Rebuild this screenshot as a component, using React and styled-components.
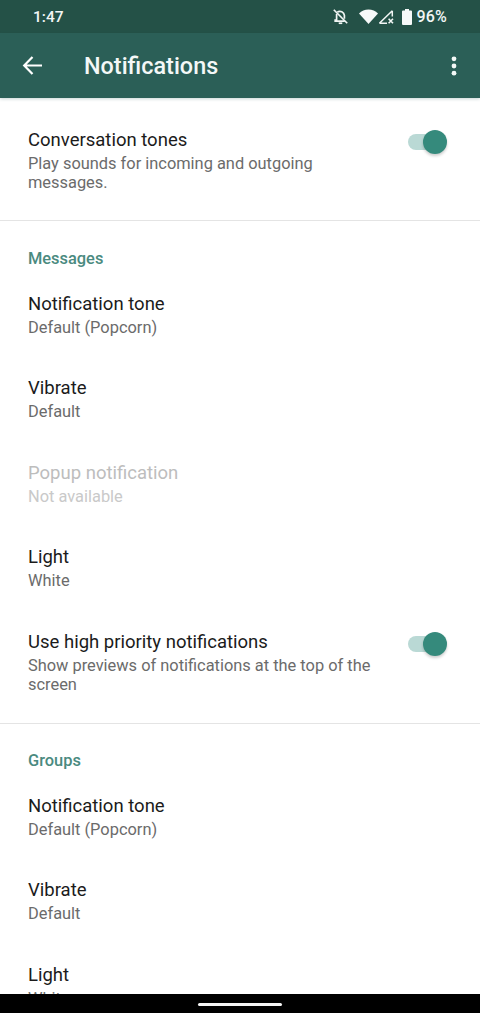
import React from "react";
import styled, { createGlobalStyle } from "styled-components";

const GlobalStyle = createGlobalStyle`
  html, body {
    margin: 0;
    padding: 0;
    background: #fff;
  }
  body {
    font-family: Roboto, "Liberation Sans", sans-serif;
  }
`;

const Page = styled.div`
  width: 480px;
  height: 1013px;
  display: flex;
  flex-direction: column;
  overflow: hidden;
  background: #fff;
`;

const StatusBar = styled.div`
  height: 33px;
  flex: none;
  display: flex;
  align-items: center;
  justify-content: space-between;
  padding: 0 33px 0 33px;
  background: #245147;
  color: #f2f6f5;
  font-size: 15.5px;
  font-weight: 500;
`;

const StatusIcons = styled.div`
  display: flex;
  align-items: center;
  font-size: 16px;
  letter-spacing: 0.2px;
`;

const StatusIcon = styled.svg`
  display: block;
  margin-right: ${(p) => p.$gap || 0}px;
`;

const AppBar = styled.header`
  height: 65px;
  flex: none;
  position: relative;
  z-index: 1;
  display: flex;
  align-items: center;
  padding: 0 23px 0 21px;
  background: #2b5f57;
  color: #fff;
  box-shadow: 0 1px 3px rgba(40, 90, 90, 0.25);
`;

const AppTitle = styled.h1`
  flex: 1;
  margin: 0 0 0 39px;
  font-size: 23.4px;
  font-weight: 500;
  color: #f4f8f7;
`;

const Content = styled.main`
  flex: 1;
  min-height: 0;
  overflow: hidden;
`;

const Section = styled.section`
  padding: ${(p) => p.$top || 0}px 0 ${(p) => p.$bottom || 0}px;
  border-bottom: ${(p) => (p.$divided ? "1px solid #e4e4e4" : "none")};
`;

const SectionHeading = styled.h2`
  margin: 0;
  padding: 0 28px;
  height: 20px;
  line-height: 20px;
  font-size: 16.4px;
  font-weight: 500;
  color: #4a8a80;
`;

const Row = styled.div`
  display: flex;
  align-items: flex-start;
  justify-content: space-between;
  padding: ${(p) => p.$top || 0}px 28px 0;
  height: ${(p) => p.$height || 84.5}px;
  box-sizing: border-box;
`;

const RowText = styled.div`
  width: 350px;
`;

const RowTitle = styled.div`
  font-size: 18.5px;
  line-height: 24px;
  color: ${(p) => (p.$disabled ? "#bdbdbd" : "#1b1b1b")};
`;

const RowSub = styled.div`
  margin-top: 2px;
  font-size: 16.4px;
  line-height: 19px;
  color: ${(p) => (p.$disabled ? "#c9c9c9" : "#6b6b6b")};
`;

const Toggle = styled.div`
  position: relative;
  flex: none;
  width: 32px;
  height: 16px;
  margin: 6px 12px 0 0;
  border-radius: 8px;
  background: #bad9d5;
`;

const Knob = styled.div`
  position: absolute;
  top: -4px;
  right: -7px;
  width: 24px;
  height: 24px;
  border-radius: 50%;
  background: #358a7c;
  box-shadow: 0 2px 3px rgba(0, 0, 0, 0.2);
`;

const NavBar = styled.div`
  height: 19px;
  flex: none;
  position: relative;
  z-index: 1;
  display: flex;
  align-items: center;
  justify-content: center;
  background: #000;
`;

const NavHandle = styled.div`
  width: 84px;
  height: 3px;
  margin-top: 1px;
  border-radius: 2px;
  background: #f5f5f5;
`;

const Setting = ({ title, sub, disabled, toggle, top, height }) => (
  <Row $top={top} $height={height}>
    <RowText>
      <RowTitle $disabled={disabled}>{title}</RowTitle>
      <RowSub $disabled={disabled}>{sub}</RowSub>
    </RowText>
    {toggle && (
      <Toggle>
        <Knob />
      </Toggle>
    )}
  </Row>
);

const BellOff = () => (
  <StatusIcon $gap={10} width="17" height="17" viewBox="0 0 24 24" fill="none" stroke="#f2f6f5" strokeWidth="2.4">
    <path d="M9.5 21.5h5" />
    <path d="M6.5 8.5V17H4.5v1.5H18M7.5 5.8A6.5 6.5 0 0 1 17.5 10.5V15" />
    <path d="M2.5 2.5l19 19" />
  </StatusIcon>
);

const Wifi = () => (
  <StatusIcon width="19" height="15" viewBox="0 0 19 15">
    <path d="M0 4.6C2.5 1.8 5.8 0.4 9.5 0.4S16.5 1.8 19 4.6L9.5 15z" fill="#f7f9f9" />
  </StatusIcon>
);

const Signal = () => (
  <StatusIcon $gap={8} width="16" height="15" viewBox="0 0 16 15" fill="none" stroke="#f2f6f5">
    <path d="M14.3 1.8V7.5M1.4 14.2L14.3 1.8M1.4 14.2H9" strokeWidth="1.5" />
    <path d="M10.6 9.8l4.4 4.4M15 9.8l-4.4 4.4" strokeWidth="1.6" />
  </StatusIcon>
);

const Battery = () => (
  <StatusIcon $gap={4} width="10" height="16" viewBox="0 0 10 16">
    <path d="M3 0h4v1.5h2a1 1 0 0 1 1 1V15a1 1 0 0 1-1 1H1a1 1 0 0 1-1-1V2.5a1 1 0 0 1 1-1h2z" fill="#f7f9f9" />
  </StatusIcon>
);

const BackArrow = () => (
  <svg width="24" height="24" viewBox="0 0 24 24" fill="none" stroke="#fff" strokeWidth="2.2">
    <path d="M21 11.5H3.5M11.5 3L3.2 11.5l8.3 8.5" />
  </svg>
);

const MoreDots = () => (
  <svg width="6" height="20" viewBox="0 0 6 20" fill="#f4f8f7">
    <circle cx="3" cy="2.8" r="2.4" />
    <circle cx="3" cy="10" r="2.4" />
    <circle cx="3" cy="17.2" r="2.4" />
  </svg>
);

export default function App() {
  return (
    <Page>
      <GlobalStyle />
      <StatusBar>
        <span>1:47</span>
        <StatusIcons>
          <BellOff />
          <Wifi />
          <Signal />
          <Battery />
          <span>96%</span>
        </StatusIcons>
      </StatusBar>
      <AppBar>
        <BackArrow />
        <AppTitle>Notifications</AppTitle>
        <MoreDots />
      </AppBar>
      <Content>
        <Section $divided $top={30} $bottom={18}>
          <Setting
            toggle
            height={74}
            title="Conversation tones"
            sub={<>Play sounds for incoming and outgoing<br />messages.</>}
          />
        </Section>
        <Section $divided $top={28} $bottom={19.5}>
          <SectionHeading>Messages</SectionHeading>
          <Setting top={23} height={107} title="Notification tone" sub="Default (Popcorn)" />
          <Setting title="Vibrate" sub="Default" />
          <Setting disabled title="Popup notification" sub="Not available" />
          <Setting title="Light" sub="White" />
          <Setting
            toggle
            height={74}
            title="Use high priority notifications"
            sub={<>Show previews of notifications at the top of the<br />screen</>}
          />
        </Section>
        <Section $top={27}>
          <SectionHeading>Groups</SectionHeading>
          <Setting top={23} height={107} title="Notification tone" sub="Default (Popcorn)" />
          <Setting title="Vibrate" sub="Default" />
          <Setting title="Light" sub="White" />
        </Section>
      </Content>
      <NavBar>
        <NavHandle />
      </NavBar>
    </Page>
  );
}
